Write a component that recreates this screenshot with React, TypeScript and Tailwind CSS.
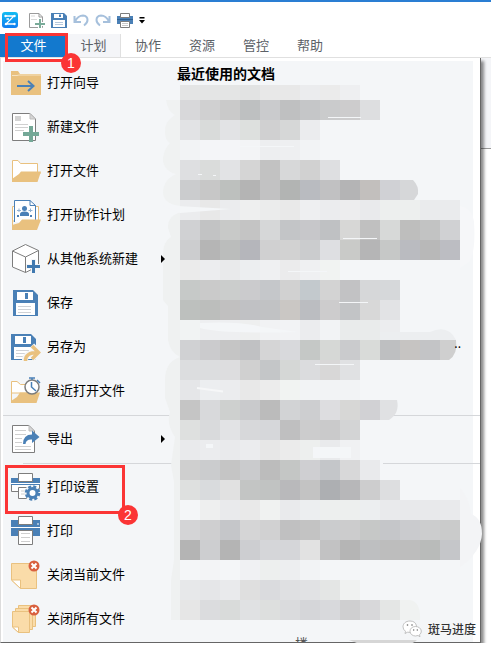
import { ReactNode } from "react";

const BLUE = "#4a80b6";
const TAN = "#e9c17f";
const GRAY = "#7d7d7d";

interface IconProps {
  children: ReactNode;
}

function MenuIcon({ children }: IconProps) {
  return (
    <svg viewBox="0 0 30 32" className="h-8 w-[30px] shrink-0" fill="none" aria-hidden="true">
      {children}
    </svg>
  );
}

function ToolIcon({ children }: IconProps) {
  return (
    <svg viewBox="0 0 16 16" className="h-4 w-4" fill="none" aria-hidden="true">
      {children}
    </svg>
  );
}

function WizardIcon() {
  return (
    <MenuIcon>
      <path d="M0 4H7L9 7H30V28H0Z" fill={TAN} />
      <path d="M1 8.5H6L8 8H30" stroke="#f5e3c3" />
      <path d="M6 19H22M17 14L22.5 19L17 24" stroke={BLUE} strokeWidth="2" />
    </MenuIcon>
  );
}

function NewFileIcon() {
  return (
    <MenuIcon>
      <path d="M1.5 2.5H19L24.5 8V29.5H1.5Z" fill="#fff" stroke={GRAY} />
      <path d="M19 2.5V8H24.5Z" fill="#d5d5d5" stroke="#bdbdbd" />
      <path d="M4 5H10V10H4Z" fill="#d3d3d3" />
      <path d="M4 13.5H17M4 16.5H17M4 19.5H13" stroke="#d0d0d0" />
      <path d="M20 15V31M12 23H28" stroke="#74a897" strokeWidth="4" />
    </MenuIcon>
  );
}

function OpenFolderIcon() {
  return (
    <MenuIcon>
      <path d="M1.5 27V5.5H7L9.5 8.5H26.5V18H30" fill="#fff" stroke={TAN} />
      <path d="M1 27L1 24L8 19L10 16.5H30L26.5 27Z" fill={TAN} />
    </MenuIcon>
  );
}

function TeamPlanIcon() {
  return (
    <MenuIcon>
      <path d="M1.5 30V7.5H27.5V22H1.5" fill="#fff" stroke={TAN} />
      <path d="M3.5 23V1.5H19L24.5 6.5V23" fill="#fff" stroke={BLUE} />
      <path d="M19 1.5V6.5H24.5" stroke={BLUE} />
      <circle cx="13.5" cy="9.5" r="2.5" fill={BLUE} />
      <path d="M9 17V15Q9 12.5 13.5 12.5Q18 12.5 18 15V17Z" fill={BLUE} />
      <path d="M8 9.5V13M6 11.5H10M19.5 9.5V13M17.5 11.5H21.5" stroke="#8fb1d3" />
      <path d="M6 17H8M19 17H21" stroke={BLUE} strokeWidth="2" />
      <path d="M1 31V26L8 24L11 20.5H30L26 31Z" fill={TAN} />
    </MenuIcon>
  );
}

function CubeIcon() {
  return (
    <MenuIcon>
      <path d="M14.5 1.5L27.5 7.5V23L14.5 29.5L1.5 24V8Z" fill="#fff" stroke={GRAY} />
      <path d="M1.5 8L14.5 14L27.5 7.5M14.5 14V29.5" stroke={GRAY} />
      <path d="M22.5 16V31M15 23.5H30" stroke="#f4f6f8" strokeWidth="5" />
      <path d="M22.5 17V30M16 23.5H29" stroke="#4079b0" strokeWidth="3" />
    </MenuIcon>
  );
}

function Floppy() {
  return (
    <>
      <path d="M0 3H20L25 8V29H0Z" fill={BLUE} />
      <path d="M4 5H20V13H4Z" fill="#fff" />
      <path d="M12 6H15V12H12Z" fill={BLUE} />
      <path d="M3 16H22V28H3Z" fill="#fff" />
      <path d="M5 19.5H18M5 22.5H18M5 25.5H18" stroke="#cfd2d6" />
    </>
  );
}

function SaveIcon() {
  return (
    <MenuIcon>
      <g transform="translate(2 0)">
        <Floppy />
      </g>
    </MenuIcon>
  );
}

function SaveAsIcon() {
  return (
    <MenuIcon>
      <Floppy />
      <path d="M14 31Q13 21 27 21.5M21 14.5L28 21.5L21 28" stroke="#f4f6f8" strokeWidth="6" />
      <path d="M14.5 30Q14 21.5 27 21.5M21 15L27.5 21.5L21 28" stroke={TAN} strokeWidth="3.5" />
    </MenuIcon>
  );
}

function RecentIcon() {
  return (
    <MenuIcon>
      <path d="M0.5 27V6.5H6L9.5 9.5H22V18H0.5" fill="#fff" stroke={TAN} />
      <path d="M0 28V26L6 22L9 17.5H29L25.5 28Z" fill={TAN} />
      <circle cx="21" cy="12" r="7" fill="#fff" stroke={GRAY} strokeWidth="1.5" />
      <path d="M18 3H24M21 3V5M26 5L29 8" stroke={BLUE} strokeWidth="1.5" />
      <path d="M20.5 7V12L25 16" stroke={BLUE} strokeWidth="1.5" />
    </MenuIcon>
  );
}

function ExportIcon() {
  return (
    <MenuIcon>
      <path d="M1.5 2.5H18L23.5 8V29.5H1.5Z" fill="#fff" stroke={GRAY} />
      <path d="M18 2.5V8H23.5Z" fill="#d5d5d5" stroke="#bdbdbd" />
      <path d="M4 7.5H15M4 11.5H15M4 15.5H11M4 19.5H11M4 23.5H20M4 26.5H20" stroke="#cfcfcf" />
      <path d="M12 21Q12 11.5 21 11.5V7.5L28.5 14L21 20V16.5Q15 16 14.5 21Z" fill={BLUE} />
    </MenuIcon>
  );
}

function PrintSetupIcon() {
  return (
    <MenuIcon>
      <path d="M0.5 13H28.5V20.5H0.5Z" fill="#fff" stroke={GRAY} />
      <path d="M0 7H29V14H0Z" fill={BLUE} />
      <path d="M0 12.5H29" stroke="#fff" />
      <path d="M7.5 2.5H21.5V10.5H7.5Z" fill="#fff" stroke={GRAY} />
      <path d="M7.5 16.5H21.5V27.5H7.5Z" fill="#fff" stroke={GRAY} />
      <path d="M10 20H16M10 23H14" stroke="#cfcfcf" />
      <circle cx="21.5" cy="22" r="8" fill="#f4f6f8" />
      <circle cx="21.5" cy="22" r="6.5" stroke={BLUE} strokeWidth="2.5" strokeDasharray="3 2.1" />
      <circle cx="21.5" cy="22" r="4.5" fill="#fff" stroke={BLUE} strokeWidth="3" />
    </MenuIcon>
  );
}

function PrintIcon() {
  return (
    <MenuIcon>
      <path d="M0 5H29V21H0Z" fill={BLUE} />
      <path d="M0 12.5H29M26 9H28" stroke="#fff" />
      <path d="M7.5 1.5H21.5V9.5H7.5Z" fill="#fff" stroke={GRAY} />
      <path d="M7.5 15.5H21.5V29.5H7.5Z" fill="#fff" stroke={GRAY} />
      <path d="M10 18.5H19M10 22.5H19M10 26.5H19" stroke="#cfcfcf" />
    </MenuIcon>
  );
}

function CloseMark() {
  return (
    <>
      <circle cx="23" cy="7" r="5.5" fill="#d9603f" />
      <path d="M20.5 4.5L25.5 9.5M25.5 4.5L20.5 9.5" stroke="#fff" strokeWidth="2" />
    </>
  );
}

function CloseFileIcon() {
  return (
    <MenuIcon>
      <path d="M0.5 4.5H25.5V29.5H9.5L0.5 21Z" fill="#fadca9" stroke={TAN} />
      <path d="M0.5 21H9.5V29.5Z" fill="#fff" stroke={TAN} />
      <CloseMark />
    </MenuIcon>
  );
}

function CloseAllIcon() {
  return (
    <MenuIcon>
      <path d="M7.5 2.5H24.5V23.5H7.5Z" fill="#fadca9" stroke={TAN} />
      <path d="M4.5 5.5H21.5V26.5H4.5Z" fill="#fadca9" stroke={TAN} />
      <path d="M1.5 8.5H18.5V29.5H7.5L1.5 24Z" fill="#fadca9" stroke={TAN} />
      <path d="M1.5 24H7.5V29.5Z" fill="#fff" stroke={TAN} />
      <CloseMark />
    </MenuIcon>
  );
}

interface MenuEntry {
  label: string;
  icon: ReactNode;
  submenu?: boolean;
  marked?: boolean;
}

const fileItems: MenuEntry[] = [
  { label: "打开向导", icon: <WizardIcon /> },
  { label: "新建文件", icon: <NewFileIcon /> },
  { label: "打开文件", icon: <OpenFolderIcon /> },
  { label: "打开协作计划", icon: <TeamPlanIcon /> },
  { label: "从其他系统新建", icon: <CubeIcon />, submenu: true },
  { label: "保存", icon: <SaveIcon /> },
  { label: "另存为", icon: <SaveAsIcon /> },
  { label: "最近打开文件", icon: <RecentIcon /> },
];

const exportItems: MenuEntry[] = [{ label: "导出", icon: <ExportIcon />, submenu: true }];

const printItems: MenuEntry[] = [
  { label: "打印设置", icon: <PrintSetupIcon />, marked: true },
  { label: "打印", icon: <PrintIcon /> },
  { label: "关闭当前文件", icon: <CloseFileIcon /> },
  { label: "关闭所有文件", icon: <CloseAllIcon /> },
];

const tabs = ["计划", "协作", "资源", "管控", "帮助"];

// Each row: top edge, then the cell colours from left to right
const mosaic: [number, string][] = [
  [80, "e4e5e5 e4e5e5 e4e5e5 e2e3e3 e8e8e8 e8e8e8 ebecee ebebeb eeeff1"],
  [100, "d8d8da d0d0d1 cacaca bec0c1 cacbcd bfc0c1 c5c6c8 cacbcc cdcccd dddee0"],
  [120, "e2e3e5 d9dbda e2e3e5 dde0de d0d0d1 d6d7d7 ebecee"],
  [140, "f2f3f5 f4f5f8 f4f5f8 f3f4f6 edeef0 eeeff1 f2f3f5"],
  [160, "dedfe1 dadcdb e2e3e5 d5d5d5 c2c2c2 d7d8d9 d1d1d1 dedfe1"],
  [180, "cbccce c7c7c7 bdc0be b4b4b4 c2c2c3 b2b4b3 b9bbc0 c1c1c2 b4b4b5 c2bfbd d0d1d5"],
  [200, "ebecee e8e8e8 ebecee eeefef ebecec e9e9e9 eeeff1 ebecee ededee e9eaec edefee edefee eaebed eaebed"],
  [220, "d0d1d3 c2c3c4 c8c9c8 c4c4c4 d6d7d8 c3c5c7 c7c7ca bfc1c3 d7d7d6 c0c0c0 d7d9d8 bebebd c2c3c3 d0d1d3"],
  [240, "cccdcf b5b5b5 bbbdbc b5b6bb d0d0d1 d2d2d2 cbccce dedfe2 c9cac8 b5b5b6 c6c8c7 babbc0 b8b8b8 bcbdc2"],
  [260, "ebebeb ecedef e9eaeb eceef0 eff0f2 ebebec eff0f2 f1f3f2"],
  [280, "c6c9c8 cacaca cbcdcc cbcbcd c5c7ca d1d1d1 c3c9cd d3d3d3 c2c2c4 d6d7d9 d6d8da"],
  [300, "bdc0be bcbebc c1c0c0 c0c1c4 c1c2c4 cac7c4 bbbdc1 cdcccd c2c4c6 d8d8d8 e2e3e5"],
  [320, "f1f3f3 eeeff1 eeeff1 eeefef f1f2f4 f2f3f5 ebecee f2f3f5 e9ebeb e9ebeb ecedef"],
  [340, "d0d1d3 cbcbcd c5c5c5 c0c1c3 d5d5d6 d8d9dc c5c8c6 d6d8d6 cacbcd d9dbd9 bebfc1 c6c4c2 c3c4c6"],
  [360, "dcdddf dcdddf dddddf d0d0d0 c4c6c8 d5d7d6 dbdcde d8d7d7 e0e1e3"],
  [380, "e5e6e8 eceef0 ebecee e8e8e8 ececec f1f3f2 f2f3f5 f2f3f5 f2f3f5"],
  [400, "c5c5c5 d8d9db ced0cf c9cacc bbbbbb d2d3d5 cdced0 dddde0 d7d7d6 d1d1d4"],
  [420, "dee0df d9dadc e2e3e5 d7d8da d6d7da bfbfc0 cccccd cacacb d3d4d5"],
  [440, "e9eaec ebecee e9eaec ebecee e7e7e7 ebebeb edefee e9eaec f0f1f3"],
  [460, "cfcfcf cbccce c5c5c5 cacbcd bcbcbc c4c6c5 cfcfd2 c4c6c9 d8d8d9 e9eaec"],
  [480, "dee0df d9dbdd e1e1e1 c3c5c4 c1c3c2 b9b9bb c3c3c3 adafb2 b7b7b9 cdcdce dddee0"],
  [500, "f4f6f8 eeefef e9eaec e9e9e9 f0f2f1 e9eaec eceef0 edefee edefee eceef0 e9eaec e8e9eb e8e9eb e9eaec"],
  [520, "d4d4d6 cfcfd0 c5c6c9 d5d5d6 d1d1d2 c0c0c1 c3c3c3 cbccce cccccd c6c8c7 c5c6c9 cacbce cccdce cacbcb"],
  [540, "b4b4b4 cdced0 b4b4b4 cdced1 d5d6d9 d5d6d9 e2e2e2 c2c2c3 b5b5b5 bebfc1 bdbdbd bdbdbd b9bbba c5c6c9"],
  [560, "f4f6f8 f3f4f6 f4f6f8 f0f1f3 edefee edeef0 f2f3f5"],
  [580, "e7e8ea e5e6e8 e9eaec dfdfdf dadbde dfe0e2 e1e2e4 e4e6e5 f0f2f1"],
  [600, "e6e6e6 dbdcde d9dbda e0e1e3 dddfde dadbdd d5d6d9 d8d9dc cfcfd0 d8d8da e4e6e5"],
];

function CensoredList() {
  return (
    <svg viewBox="160 85 325 560" className="h-[560px] w-[325px]" aria-hidden="true">
      {/* Soft left edge of the smear */}
      <path
        d="M180 100H166Q168 112 175 115Q164 122 165 132Q165 140 170 143Q162 152 163 162Q166 172 176 174Q163 180 163 193Q164 204 180 206Z"
        fill="#f0f2f2"
      />
      <path
        d="M180 212Q167 217 168 228L171 237Q163 242 163 254V300L168 306V340Q170 352 180 357Q165 362 165 380V398L170 412Q166 424 175 437L171 465L174 482V560L171 580V620H180Z"
        fill="#eff1f1"
      />
      {/* Hide the separators behind the smear */}
      <path d="M180 100H360V410H394L385 425H383V480H180Z" fill="#f4f6f8" />
      {mosaic.map(([top, colors]) =>
        colors
          .split(" ")
          .map((color, i) => (
            <rect
              key={`${top}-${i}`}
              x={180 + i * 20}
              y={Math.max(top, 85)}
              width="20"
              height={top === 80 ? 15 : 20}
              fill={`#${color}`}
            />
          ))
      )}
      {/* Rounded tails */}
      <path d="M400 180H413Q419 186 418 194L414 200H400Z" fill="#d6d7d9" />
      <path d="M440 340H456Q458 354 449 360H440Z" fill="#cfcfcf" />
      <path d="M380 332H430Q448 324 456 340H380Z" fill="#eceef0" />
      <path d="M380 400H397Q400 413 389 420H380Z" fill="#e0e1e3" />
      <path d="M400 600H410Q421 602 420 620H400Z" fill="#f0f2f1" />
      <path d="M460 206Q472 208 474 222Q476 252 469 262L460 268Z" fill="#f6f7f9" />
      <path d="M460 488Q470 500 471 514Q482 518 482 534Q481 552 460 567Z" fill="#f3f4f6" />
      {/* Brush marks */}
      <path d="M160 205L195 207L231 209L180 213Z" fill="#f4f6f8" />
      <path d="M200 323Q240 321 262 327L298 332Q220 334 200 328Z" fill="#f4f6f8" />
      <path d="M313 447H351V458H313Z" fill="#f4f6f8" />
      <path d="M206 444H213V448H206Z" fill="#f4f6f8" />
      <path
        d="M328 117.5H361M240 146.5H294M343 238.5H377M288 271.5H327M339 302.5H368M315 364.5H354M198 174.5H202M213 175.5H216"
        stroke="#f4f6f8"
      />
      <path d="M197 388L223 391.5" stroke="#f6f7f8" strokeWidth="2" />
      <path d="M349 640H417Q412 645 402 645H362Z" fill="#d6d6d6" />
    </svg>
  );
}

function StepBadge({ children }: { children: ReactNode }) {
  return (
    <span className="flex h-5 w-5 items-center justify-center rounded-full bg-[#fb3535] font-['Liberation_Sans'] text-sm text-white">
      {children}
    </span>
  );
}

function MenuRow({ label, icon, submenu, marked }: MenuEntry) {
  return (
    <li className="relative">
      <button type="button" className="flex h-11 w-full items-center gap-1.5 pl-2 text-left text-[13px]">
        {icon}
        <span className="w-[114px] pb-0.5 whitespace-nowrap">{label}</span>
        {submenu && (
          <svg viewBox="0 0 4 8" className="-ml-1.5 h-2 w-1" aria-hidden="true">
            <path d="M0 0L4 4L0 8Z" fill="#000" />
          </svg>
        )}
      </button>
      {marked && (
        <div className="pointer-events-none absolute top-0 left-0.5 h-[49px] w-[120px] border-3 border-[#fb3535]">
          <div className="absolute -right-4 -bottom-3.5">
            <StepBadge>2</StepBadge>
          </div>
        </div>
      )}
    </li>
  );
}

function MenuGroup({ items }: { items: MenuEntry[] }) {
  return (
    <ul>
      {items.map((item) => (
        <MenuRow key={item.label} {...item} />
      ))}
    </ul>
  );
}

function QuickAccess() {
  return (
    <header className="flex h-8 items-center gap-1.5 pt-1 pl-0.5">
      <svg viewBox="0 0 16 16" className="mr-[5px] h-4 w-4" aria-hidden="true">
        <defs>
          <linearGradient id="logo" x1="0" y1="0" x2="0" y2="1">
            <stop offset="0" stopColor="#12bdf2" />
            <stop offset="1" stopColor="#0f7cf0" />
          </linearGradient>
        </defs>
        <rect width="16" height="16" rx="3" fill="url(#logo)" />
        <path d="M3.5 4H12L4 12H12.5M4.5 7H7" stroke="#fff" strokeWidth="1.3" fill="none" />
        <g fill="#fff">
          <circle cx="3.5" cy="4" r="1.2" />
          <circle cx="12.5" cy="4" r="1.2" />
          <circle cx="4" cy="12" r="1.2" />
          <circle cx="12.5" cy="12" r="1.2" />
        </g>
      </svg>
      <button type="button" aria-label="新建">
        <ToolIcon>
          <path d="M0.5 1.5H10L13.5 5V15.5H0.5Z" fill="#fff" stroke="#9b9b9b" />
          <path d="M2 4H6M2 7.5H8" stroke="#d8d8d8" />
          <path d="M10 1.5V5H13.5" stroke="#9b9b9b" />
          <path d="M11 6V16M6 12H16" stroke="#fff" strokeWidth="4" />
          <path d="M11 7V16M6 12H16" stroke="#79ab99" strokeWidth="2" />
        </ToolIcon>
      </button>
      <button type="button" aria-label="保存">
        <ToolIcon>
          <path d="M0 1H13L16 4V16H0Z" fill={BLUE} />
          <path d="M3 2H12V6H3Z" fill="#fff" />
          <path d="M8 2.5H10V5H8Z" fill={BLUE} />
          <path d="M2 8H14V15H2Z" fill="#fff" />
          <path d="M4 10.5H12M4 12.5H12" stroke="#b5c8dc" />
        </ToolIcon>
      </button>
      <button type="button" aria-label="撤销">
        <ToolIcon>
          <path
            d="M1.5 4V10H8M2 9.5Q5 3.5 10 3.5Q14.5 4 14.5 8Q14.5 11 11 13.5"
            stroke="#a6c0dc"
            strokeWidth="2"
          />
        </ToolIcon>
      </button>
      <button type="button" aria-label="重做">
        <ToolIcon>
          <path
            d="M14.5 4V10H8M14 9.5Q11 3.5 6 3.5Q1.5 4 1.5 8Q1.5 11 5 13.5"
            stroke="#a6c0dc"
            strokeWidth="2"
          />
        </ToolIcon>
      </button>
      <button type="button" aria-label="打印">
        <ToolIcon>
          <path d="M0 4H16V12H0Z" fill={BLUE} />
          <path d="M0 7.5H16" stroke="#31608f" />
          <path d="M3.5 1.5H12.5V5.5H3.5Z" fill="#fff" stroke={GRAY} />
          <path d="M3.5 9.5H12.5V15.5H3.5Z" fill="#fff" stroke={GRAY} />
          <path d="M5 11.5H11M5 13.5H11" stroke="#c9c9c9" />
        </ToolIcon>
      </button>
      <button type="button" aria-label="自定义快速访问">
        <svg viewBox="0 0 6 7" className="h-[7px] w-1.5" aria-hidden="true">
          <path d="M0.5 0H5.5V1.5H0.5ZM0 3H6L3 6.5Z" fill="#000" />
        </svg>
      </button>
    </header>
  );
}

function TabBar() {
  return (
    <nav className="relative z-20 flex h-6 border-b border-[#e0e0e0] text-[13px] text-[#5c6167]">
      <button type="button" className="w-[67px] bg-[#1379ce] pb-0.5 text-white">
        文件
      </button>
      {tabs.map((tab, i) => (
        <button
          key={tab}
          type="button"
          className={i === 0 ? "w-[54px] border-r border-[#e0e0e0] bg-[#f4f5f8] pb-0.5" : "w-[54px] pb-0.5"}
        >
          {tab}
        </button>
      ))}
      <div className="pointer-events-none absolute -top-px left-[5px] h-[29px] w-[63px] border-3 border-[#fb3535]">
        <div className="absolute -right-4 -bottom-3.5">
          <StepBadge>1</StepBadge>
        </div>
      </div>
    </nav>
  );
}

function RecentDocuments() {
  return (
    <section className="pointer-events-none col-start-1 row-start-1 flex flex-col pl-[157px]">
      <h2 className="h-6 pt-0.5 pl-[17px] text-sm leading-5 font-bold text-black">最近使用的文档</h2>
      <div className="h-[554px]">
        <CensoredList />
      </div>
    </section>
  );
}

function Watermark() {
  return (
    <div className="flex items-center gap-1.5 text-xs font-medium text-[#333]">
      <svg viewBox="0 0 20 18" className="h-[18px] w-5" fill="#fff" stroke="#a9a9a9" strokeWidth="0.7" aria-hidden="true">
        <path d="M8 1C3.5 1 1 3.8 1 6.8Q1 9.5 3.5 11.3L3 13.5L5.5 12.2Q9 13 11.5 11.5Q15 9.5 14.5 6Q13.5 1 8 1Z" />
        <path d="M13.5 6.5C10 6.5 8 8.7 8 11.2C8 14 10.5 16 13.5 16L16 15.5L18 16.7L17.5 14.8Q19.5 13.2 19.3 11C19 8.3 16.5 6.5 13.5 6.5Z" />
        <g fill="#666" stroke="none">
          <circle cx="5.5" cy="5" r="0.8" />
          <circle cx="10" cy="5" r="0.8" />
          <circle cx="11.7" cy="10" r="0.7" />
          <circle cx="15.3" cy="10" r="0.7" />
        </g>
      </svg>
      <span>斑马进度</span>
    </div>
  );
}

export default function App() {
  return (
    <div className="border-t-2 border-[#2a7ed3] bg-white font-['Noto_Sans_CJK_SC',sans-serif] text-black">
      <QuickAccess />
      <TabBar />
      <main className="flex">
        <div className="relative min-w-0 flex-1 border-r border-b border-l border-[#666] border-l-[#dcdcdc] pt-[3px] shadow-[3px_3px_3px_rgba(0,0,0,0.45)]">
          <div className="mr-[7px] ml-0.5 grid grid-cols-1 bg-[#f4f6f8] pb-px">
            <div className="col-start-1 row-start-1">
              <MenuGroup items={fileItems} />
              <hr className="mt-0.5 -mr-[7px] mb-px border-[#d5d7da]" />
              <MenuGroup items={exportItems} />
              <hr className="mt-0.5 -mr-[7px] mb-px ml-5 border-[#d5d7da]" />
              <MenuGroup items={printItems} />
            </div>
            <RecentDocuments />
          </div>
          <div className="absolute right-1 bottom-1">
            <Watermark />
          </div>
          <div className="absolute bottom-0 left-[294px] h-[5px] overflow-hidden text-[13px] leading-3 text-[#555]">
            楼
          </div>
          <div className="absolute top-[281px] right-[19px] h-2 text-xs leading-2">..</div>
        </div>
        <aside className="h-[91px] w-2.5 border-b border-[#999] bg-[#f4f5f8]" />
      </main>
    </div>
  );
}
